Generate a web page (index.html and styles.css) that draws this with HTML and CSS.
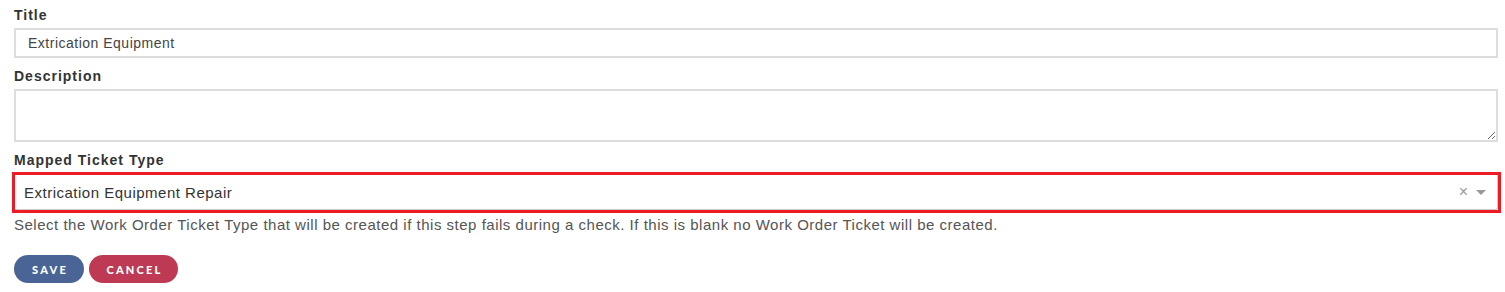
FILE: index.html
```html
<!DOCTYPE html>
<html>
<head>
<meta charset="utf-8">
<link rel="stylesheet" href="styles.css">
</head>
<body>
<form class="form">
  <div class="field">
    <label class="label">Title</label>
    <input class="input" type="text" value="Extrication Equipment">
  </div>
  <div class="field">
    <label class="label">Description</label>
    <textarea class="textarea"></textarea>
  </div>
  <div class="field field-select">
    <label class="label">Mapped Ticket Type</label>
    <div class="highlight">
      <div class="select">
        <span class="select-value">Extrication Equipment Repair</span>
        <span class="select-clear">×</span>
        <span class="select-arrow"></span>
      </div>
    </div>
    <p class="help">Select the Work Order Ticket Type that will be created if this step fails during a check. If this is blank no Work Order Ticket will be created.</p>
  </div>
  <div class="actions">
    <button type="button" class="btn btn-save">Save</button>
    <button type="button" class="btn btn-cancel">Cancel</button>
  </div>
</form>
</body>
</html>
```
FILE: styles.css
```css
* { box-sizing: border-box; }
html, body { margin: 0; padding: 0; background: #fff; }
body {
  font-family: "Liberation Sans", Arial, sans-serif;
  color: #333;
}
.form {
  padding: 5px 7px 0 14px;
  display: flex;
  flex-direction: column;
}
.field {
  display: flex;
  flex-direction: column;
  margin-bottom: 8px;
}
.label {
  font-size: 14px;
  font-weight: bold;
  color: #333;
  line-height: 20px;
  margin-bottom: 3px;
  letter-spacing: 1px;
}
.input {
  height: 30px;
  border: 2px solid #ddd;
  padding: 0 12px;
  font-family: "Liberation Sans", Arial, sans-serif;
  font-size: 14px;
  letter-spacing: 0.5px;
  color: #444;
  outline: none;
  margin: 0;
}
.textarea {
  height: 53px;
  border: 2px solid #ddd;
  padding: 6px 12px;
  font-family: "Liberation Sans", Arial, sans-serif;
  font-size: 14px;
  resize: vertical;
  outline: none;
  margin: 0;
  display: block;
}
.field-select .label { margin-bottom: 2px; }
.highlight {
  margin-left: -2px;
  margin-right: -3px;
  border: 3px solid #ed1c24;
}
.select {
  height: 35px;
  display: flex;
  align-items: center;
  padding: 0 8px 0 9px;
  border: 1px solid #ccc;
  border-top: none;
  border-left: none;
  border-radius: 0 0 3px 0;
  background: #fff;
}
.select-value {
  flex: 1;
  font-size: 15px;
  letter-spacing: 0.5px;
  color: #333;
}
.select-clear {
  font-size: 16px;
  color: #999;
  margin-right: 8px;
  line-height: 1;
}
.select-arrow {
  width: 0;
  height: 0;
  border-left: 5px solid transparent;
  border-right: 5px solid transparent;
  border-top: 5px solid #999;
  margin-right: 3px;
}
.help {
  margin: 2px 0 0 0;
  font-size: 15px;
  letter-spacing: 0.51px;
  color: #555;
  line-height: 20px;
}
.actions {
  display: flex;
  gap: 5px;
  margin-top: 12px;
}
.btn {
  height: 28px;
  border: none;
  border-radius: 14px;
  color: #fff;
  font-family: "Lato", "Liberation Sans", sans-serif;
  font-weight: 900;
  font-size: 11px;
  letter-spacing: 2.2px;
  text-transform: uppercase;
  padding: 0 0 0 2px;
  cursor: pointer;
}
.btn-save { width: 70px; background: #4a6595; }
.btn-cancel { width: 89px; background: #be3a54; }
```
